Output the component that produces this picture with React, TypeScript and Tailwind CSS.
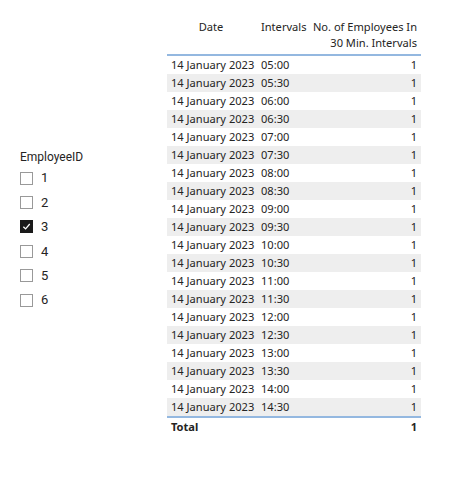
import React from "react";

const times = ["05:00","05:30","06:00","06:30","07:00","07:30","08:00","08:30","09:00","09:30","10:00","10:30","11:00","11:30","12:00","12:30","13:00","13:30","14:00","14:30"];

function Box({ checked }: { checked?: boolean }) {
  return checked ? (
    <div className="w-[13px] h-[13px] bg-[#1a1a1a] border border-[#1a1a1a] flex items-center justify-center">
      <svg width="9" height="9" viewBox="0 0 10 10"><path d="M1.5 5.2 L4 7.6 L8.6 2.2" stroke="white" strokeWidth="1.4" fill="none" /></svg>
    </div>
  ) : (
    <div className="w-[13px] h-[13px] border border-[#999999] bg-white" />
  );
}

export default function App() {
  return (
    <div className="w-[474px] h-[492px] bg-white relative text-[#252423]" style={{ fontFamily: '"Noto Sans", "Open Sans", sans-serif' }}>
      <div className="flex">
        <div className="w-[167px] pt-[148px] pl-[20px]" style={{ fontFamily: 'Roboto, "Noto Sans", sans-serif' }}>
          <div className="text-[12px] leading-[18px] text-[#252423]">EmployeeID</div>
          <div className="flex flex-col">
            {[1,2,3,4,5,6].map((n) => (
              <div key={n} className="flex items-center h-[24.4px] gap-[8px]">
                <Box checked={n === 3} />
                <span className="text-[13px]">{n}</span>
              </div>
            ))}
          </div>
        </div>
        <div className="w-[254px] pt-[19px] text-[11.1px]">
          <div className="flex h-[37px] text-[#252423] border-b-2 border-[#94b8e0] leading-[16px]">
            <div className="w-[88px] text-center">Date</div>
            <div className="w-[55px] pl-[6px]">Intervals</div>
            <div className="flex-1 text-right pr-[4px] whitespace-nowrap">No. of Employees In<br />30 Min. Intervals</div>
          </div>
          {times.map((t, i) => (
            <div key={t} className={"flex h-[18px] items-center leading-[18px] " + (i % 2 === 1 ? "bg-[#eeeeee]" : "bg-white")}>
              <div className="w-[88px] pl-[4px] whitespace-nowrap">14 January 2023</div>
              <div className="w-[55px] pl-[6px]">{t}</div>
              <div className="flex-1 text-right pr-[4px]">1</div>
            </div>
          ))}
          <div className="flex h-[20px] items-center border-t-2 border-[#94b8e0] font-bold">
            <div className="flex-1 pl-[4px]">Total</div>
            <div className="pr-[4px]">1</div>
          </div>
        </div>
      </div>
    </div>
  );
}
